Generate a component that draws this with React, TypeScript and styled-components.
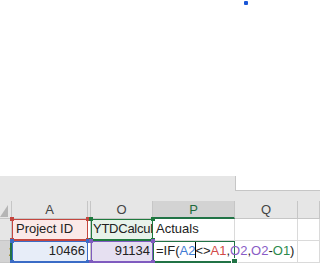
import React from 'react';
import styled, { createGlobalStyle, css } from 'styled-components';

/*
 ** SHEET FRAGMENT WHILE EDITING A FORMULA
 */

type Tone = 'red' | 'blue' | 'green' | 'purple';

const tones: Record<Tone, { line: string; fill: string; text: string }> = {
  red: { line: '#c4463f', fill: '#fbe9e8', text: '#d24a47' },
  blue: { line: '#3b6cc6', fill: '#e7edf8', text: '#3f7bd4' },
  green: { line: '#1f7a3e', fill: '#e7f2ea', text: '#2b8a4c' },
  purple: { line: '#7f5bbf', fill: '#e6e0f1', text: '#8a5cc6' },
};

const Global = createGlobalStyle`
  html, body {
    margin: 0;
    padding: 0;
    background: #fff;
    font-family: "Liberation Sans", Arial, sans-serif;
  }
`;

const Page = styled.div`
  width: 320px;
  height: 263px;
  overflow: hidden;
  display: flex;
  flex-direction: column;
`;

const Canvas = styled.div`
  height: 176px;
  padding: 1px 0 0 244px;
  box-sizing: border-box;
`;

const Dot = styled.div`
  width: 4px;
  height: 4px;
  border-radius: 1px;
  background: #1a56d6;
`;

const Strip = styled.div`
  height: 25px;
  background: #e6e6e6;
  display: flex;
  justify-content: flex-end;
  align-items: flex-start;
`;

const NameBox = styled.div`
  width: 84px;
  height: 14px;
  background: #fff;
  border-left: 1px solid #c6c6c6;
  border-bottom: 1px solid #c6c6c6;
`;

const Grid = styled.div`
  display: grid;
  grid-template-columns: 12px 76px 3px 62px 82px 63px 1fr;
  grid-template-rows: 18px 22px 22px;
  font-size: 13px;
  color: #222;
`;

const ColHead = styled.div<{ $active?: boolean }>`
  box-sizing: border-box;
  display: flex;
  align-items: center;
  justify-content: center;
  background: ${p => (p.$active ? '#d3d3d3' : '#e6e6e6')};
  color: ${p => (p.$active ? '#1e6b3d' : '#444')};
  border-right: 1px solid #c6c6c6;
  border-bottom: ${p => (p.$active ? '2px solid #217346' : '1px solid #c6c6c6')};
`;

const Corner = styled.div`
  box-sizing: border-box;
  background: #e6e6e6;
  border-right: 1px solid #c6c6c6;
  border-bottom: 1px solid #c6c6c6;
  display: flex;
  align-items: flex-end;
`;

const RowHead = styled.div<{ $active?: boolean }>`
  box-sizing: border-box;
  overflow: hidden;
  display: flex;
  align-items: center;
  justify-content: flex-end;
  background: ${p => (p.$active ? '#d3d3d3' : '#e6e6e6')};
  color: #1e6b3d;
  border-bottom: 1px solid #c6c6c6;
  border-right: ${p => (p.$active ? '2px solid #217346' : '1px solid #c6c6c6')};
`;

const RowNum = styled.span`
  margin-right: -6px;
`;

const Gap = styled.div<{ $head?: boolean }>`
  background: ${p => (p.$head ? '#e6e6e6' : '#fff')};
  border-right: 1px solid #c6c6c6;
  border-bottom: 1px solid ${p => (p.$head ? '#c6c6c6' : '#e0e0e0')};
  box-sizing: border-box;
`;

const cellBase = css`
  position: relative;
  box-sizing: border-box;
  display: flex;
  align-items: flex-end;
  padding: 0 2px 4px 3px;
  white-space: nowrap;
  line-height: 15px;
`;

const Cell = styled.div<{ $right?: boolean }>`
  ${cellBase};
  border-right: 1px solid #dadada;
  border-bottom: 1px solid #dadada;
  justify-content: ${p => (p.$right ? 'flex-end' : 'flex-start')};
`;

const RefCell = styled.div<{ $tone: Tone; $right?: boolean; $tight?: boolean }>`
  ${cellBase};
  padding-bottom: 3px;
  padding-left: ${p => (p.$tight ? '1px' : '3px')};
  padding-right: ${p => (p.$tight ? '0' : '2px')};
  letter-spacing: ${p => (p.$tight ? '-0.25px' : 'normal')};
  background: ${p => tones[p.$tone].fill};
  border: 1px solid ${p => tones[p.$tone].line};
  border-bottom-width: 2px;
  justify-content: ${p => (p.$right ? 'flex-end' : 'flex-start')};
`;

const Clip = styled.span`
  overflow: hidden;
  display: block;
`;

const Handle = styled.i<{ $tone: Tone; $corner: 'tl' | 'tr' | 'bl' | 'br' }>`
  position: absolute;
  width: 4px;
  height: 4px;
  background: ${p => tones[p.$tone].line};
  ${p => (p.$corner[0] === 't' ? 'top: -3px;' : 'bottom: -3px;')}
  ${p => (p.$corner[1] === 'l' ? 'left: -3px;' : 'right: -3px;')}
  z-index: 2;
`;

const ActiveCell = styled.div`
  ${cellBase};
  z-index: 1;
  padding-bottom: 3px;
  border: 1px solid #217346;
  border-bottom-width: 2px;
  padding-left: 2px;
`;

const FillHandle = styled.i`
  position: absolute;
  right: -4px;
  bottom: -4px;
  width: 5px;
  height: 5px;
  background: #217346;
  border: 1px solid #fff;
  z-index: 3;
`;

const Caret = styled.span`
  display: inline-block;
  width: 1px;
  height: 16px;
  margin: 0 -1px -3px 0;
  background: #000;
`;

const Tok = styled.span<{ $tone?: Tone }>`
  color: ${p => (p.$tone ? tones[p.$tone].text : '#222')};
`;

const Ref: React.FC<{ tone: Tone; right?: boolean; tight?: boolean; children: React.ReactNode }> = ({
  tone,
  right,
  tight,
  children,
}) => (
  <RefCell $tone={tone} $right={right} $tight={tight}>
    <Clip>{children}</Clip>
    <Handle $tone={tone} $corner="tl" />
    <Handle $tone={tone} $corner="tr" />
    <Handle $tone={tone} $corner="bl" />
    <Handle $tone={tone} $corner="br" />
  </RefCell>
);

const App: React.FC = () => (
  <Page>
    <Global />
    <Canvas>
      <Dot />
    </Canvas>
    <Strip>
      <NameBox />
    </Strip>
    <Grid>
      <Corner>
        <svg width="9" height="13" viewBox="0 0 9 13">
          <polygon points="0,12 8,0 8,12" fill="#b5b5b5" />
        </svg>
      </Corner>
      <ColHead>A</ColHead>
      <Gap $head />
      <ColHead>O</ColHead>
      <ColHead $active>P</ColHead>
      <ColHead>Q</ColHead>
      <ColHead />

      <RowHead />
      <Ref tone="red">Project ID</Ref>
      <Gap />
      <Ref tone="green" tight>
        YTDCalculated
      </Ref>
      <Cell>Actuals</Cell>
      <Cell />
      <Cell />

      <RowHead $active>
        <RowNum>2</RowNum>
      </RowHead>
      <Ref tone="blue" right>
        10466
      </Ref>
      <Gap />
      <Ref tone="purple" right>
        91134
      </Ref>
      <ActiveCell>
        <span>
          <Tok>=IF(</Tok>
          <Tok $tone="blue">A2</Tok>
          <Caret />
          <Tok>&lt;&gt;</Tok>
          <Tok $tone="red">A1</Tok>
          <Tok>,</Tok>
          <Tok $tone="purple">O2</Tok>
          <Tok>,</Tok>
          <Tok $tone="purple">O2</Tok>
          <Tok>-</Tok>
          <Tok $tone="green">O1</Tok>
          <Tok>)</Tok>
        </span>
        <FillHandle />
      </ActiveCell>
      <Cell />
      <Cell />
    </Grid>
  </Page>
);

export default App;
